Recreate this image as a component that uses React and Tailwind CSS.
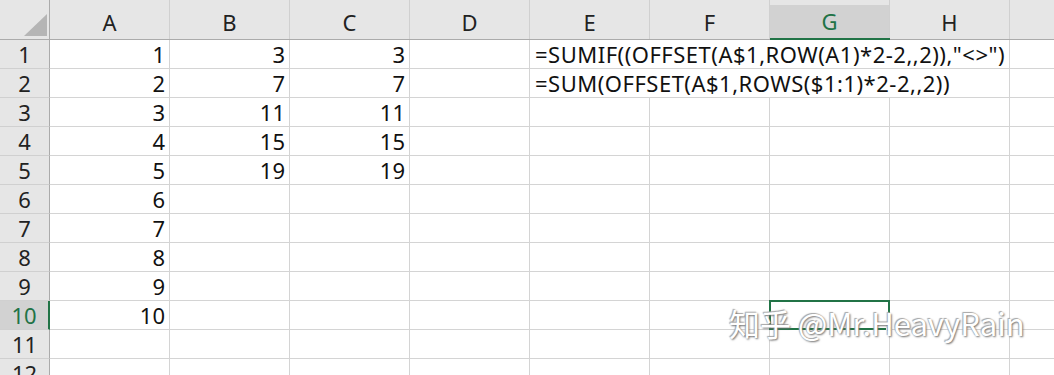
import React from 'react';

const COLS = ['A', 'B', 'C', 'D', 'E', 'F', 'G', 'H'];

const rows = [
  { a: 1, b: 3, c: 3, f: '=SUMIF((OFFSET(A$1,ROW(A1)*2-2,,2)),"<>")' },
  { a: 2, b: 7, c: 7, f: '=SUM(OFFSET(A$1,ROWS($1:1)*2-2,,2))' },
  { a: 3, b: 11, c: 11 },
  { a: 4, b: 15, c: 15 },
  { a: 5, b: 19, c: 19 },
  { a: 6 },
  { a: 7 },
  { a: 8 },
  { a: 9 },
  { a: 10 },
  {},
  {},
];

const font = { fontFamily: '"Noto Sans", "Noto Sans CJK SC", sans-serif' };

function Cell({ children, right, className = '' }) {
  return (
    <div
      className={`h-[29px] border-r border-b border-[#d4d4d4] flex items-center overflow-visible whitespace-nowrap text-[22px] text-[#111] ${
        right ? 'justify-end pr-[4px]' : 'pl-[5px]'
      } ${className}`}
    >
      {children}
    </div>
  );
}

export default function App() {
  return (
    <div className="relative w-[1054px] h-[375px] overflow-hidden bg-white" style={font}>
      <div className="grid grid-cols-[50px_repeat(8,120px)_1fr]">
        {/* corner */}
        <div className="h-[40px] bg-[#e6e6e6] border-b border-r border-[#ababab] relative">
          <svg className="absolute left-0 top-0" width="50" height="40">
            <polygon points="24,36 47,36 47,14" fill="#b5b5b5" />
          </svg>
        </div>
        {COLS.map((c) => {
          const sel = c === 'G';
          return (
            <div
              key={c}
              className={`h-[40px] bg-[#e6e6e6] flex flex-col ${
                sel ? 'border-b-2 border-[#217346]' : 'border-b border-[#ababab]'
              }`}
            >
              <div className="h-[11px] border-r border-[#d0d0d0]" />
              <div
                className={`flex-1 flex items-center justify-center text-[22px] border-r border-[#d0d0d0] ${
                  sel ? 'bg-[#d2d2d2] text-[#217346]' : 'text-[#222]'
                }`}
              >
                {c}
              </div>
            </div>
          );
        })}
        <div className="h-[40px] bg-[#e6e6e6] border-b border-[#ababab]" />

        {rows.map((r, i) => {
          const n = i + 1;
          const sel = n === 10;
          return (
            <React.Fragment key={n}>
              <div
                className={`h-[29px] flex items-center justify-center text-[22px] border-b border-[#d0d0d0] ${
                  sel
                    ? 'bg-[#d2d2d2] text-[#217346] border-r-2 border-r-[#217346]'
                    : 'bg-[#e6e6e6] text-[#222] border-r border-r-[#ababab]'
                }`}
              >
                {n}
              </div>
              <Cell right>{r.a}</Cell>
              <Cell right>{r.b}</Cell>
              <Cell right>{r.c}</Cell>
              <Cell />
              {r.f ? (
                <Cell className="col-span-4 tracking-[0.5px]">{r.f}</Cell>
              ) : (
                <>
                  <Cell />
                  <Cell />
                  <Cell className={sel ? 'relative' : ''}>
                    {sel && (
                      <div className="absolute -left-[1px] -top-[1px] w-[121px] h-[30px] border-2 border-[#217346]">
                        <div className="absolute -right-[4px] -bottom-[4px] w-[6px] h-[6px] bg-[#217346] border border-white" />
                      </div>
                    )}
                  </Cell>
                  <Cell />
                </>
              )}
              <div className="h-[29px] border-b border-[#d4d4d4]" />
            </React.Fragment>
          );
        })}
      </div>

      {/* watermark */}
      <div
        className="absolute left-[729px] top-[300px] text-[31px] text-white whitespace-nowrap"
        style={{
          fontFamily: '"Noto Sans CJK SC", sans-serif',
          textShadow: '1px 1px 2px #6f6f6f, -1px -1px 1px #a8a8a8',
        }}
      >
        知乎 @Mr.HeavyRain
      </div>
    </div>
  );
}
